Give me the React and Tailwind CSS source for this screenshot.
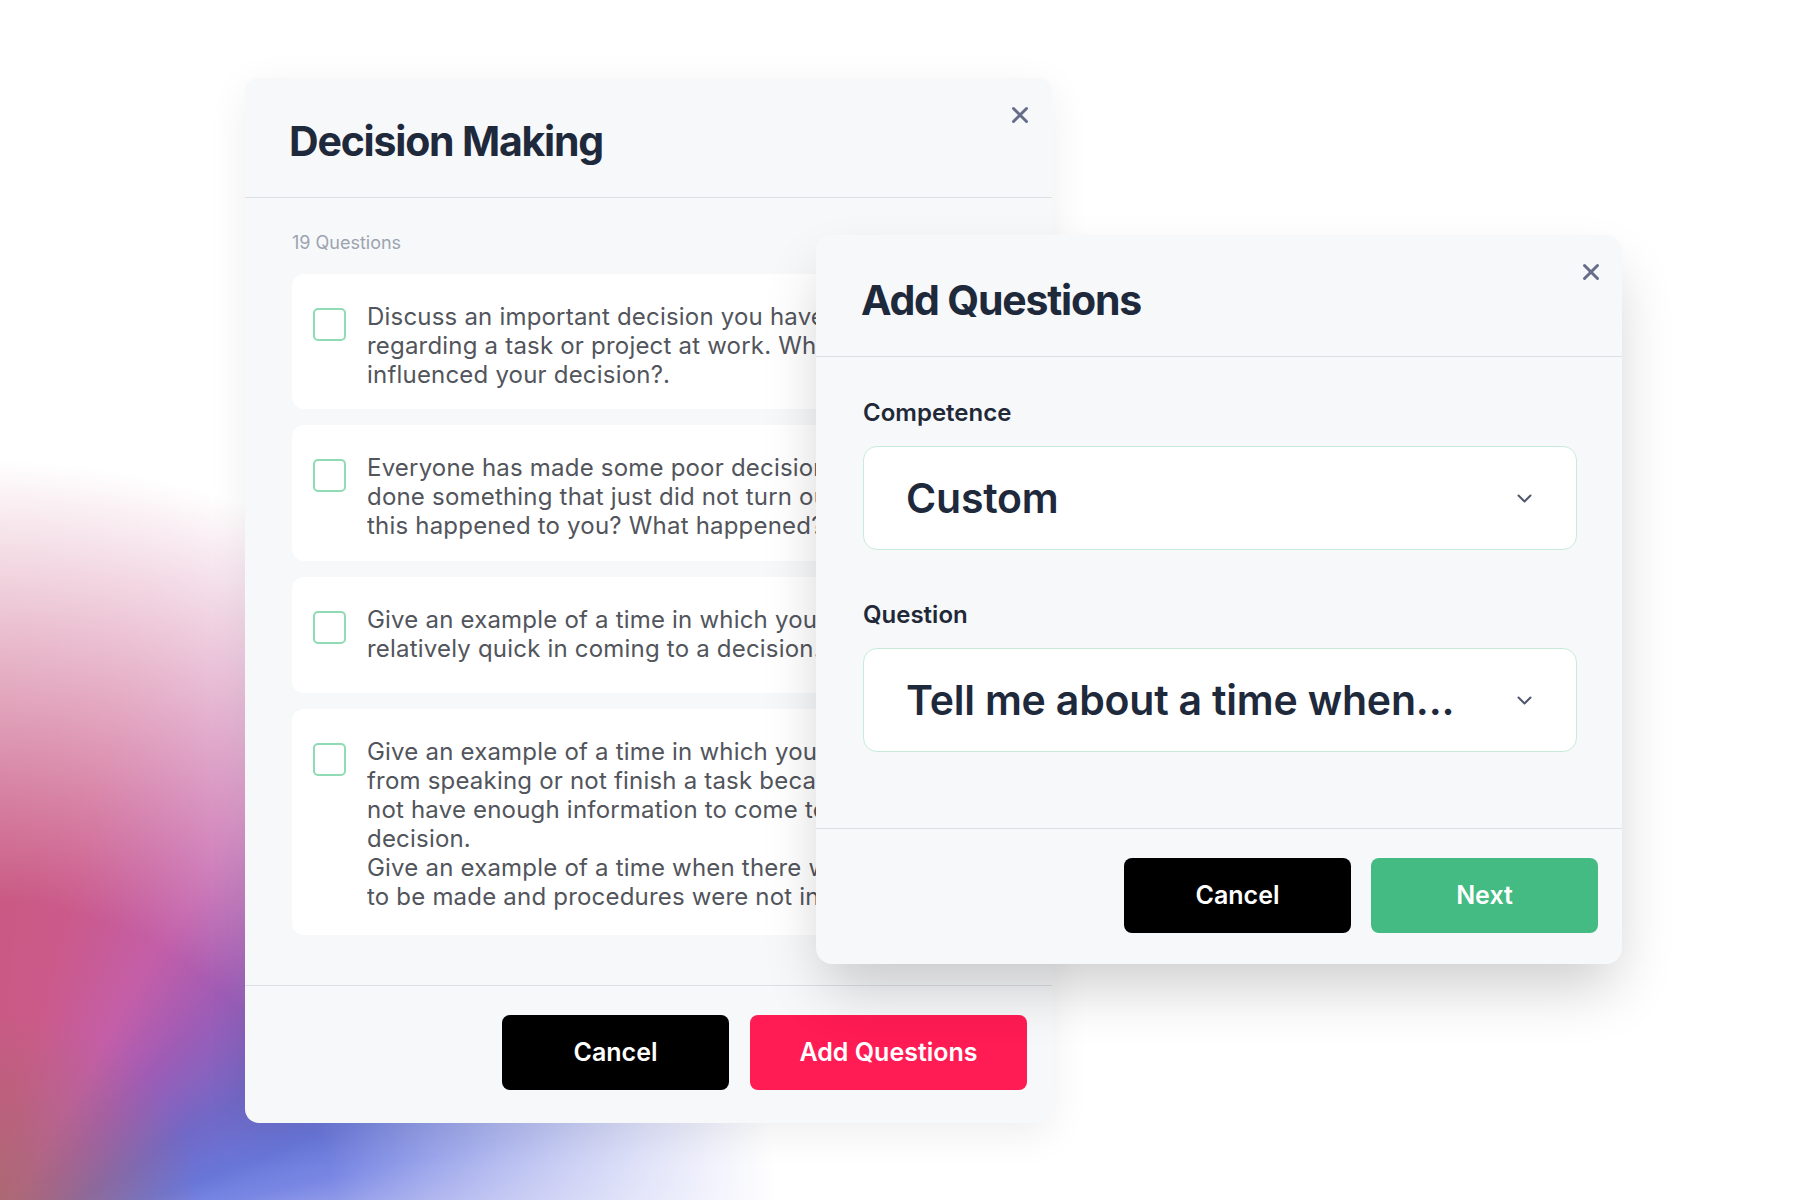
const QUESTIONS = [
  {
    h: 'h-[135px]',
    lines: [
      'Discuss an important decision you have made',
      'regarding a task or project at work. What factors',
      'influenced your decision?.',
    ],
  },
  {
    h: 'h-[136px]',
    lines: [
      'Everyone has made some poor decisions or has',
      'done something that just did not turn out right. Has',
      'this happened to you? What happened?',
    ],
  },
  {
    h: 'h-[116px]',
    lines: [
      'Give an example of a time in which you were',
      'relatively quick in coming to a decision.',
    ],
  },
  {
    h: 'h-[226px]',
    lines: [
      'Give an example of a time in which you had to refrain',
      'from speaking or not finish a task because you did',
      'not have enough information to come to a good',
      'decision.',
      'Give an example of a time when there was a decision',
      'to be made and procedures were not in place.',
    ],
  },
]

function CloseIcon() {
  return (
    <svg width="18" height="18" viewBox="0 0 18 18" fill="none" stroke="#666d8a" strokeWidth="3" strokeLinecap="round">
      <line x1="2.5" y1="2.5" x2="15.5" y2="15.5" />
      <line x1="15.5" y1="2.5" x2="2.5" y2="15.5" />
    </svg>
  )
}

function Chevron() {
  return (
    <svg width="15" height="9" viewBox="0 0 15 9" fill="none" stroke="#50566b" strokeWidth="2" strokeLinecap="round" strokeLinejoin="round">
      <polyline points="1.5,1.5 7.5,7.5 13.5,1.5" />
    </svg>
  )
}

function Select({ value }) {
  return (
    <div className="h-[104px] w-full rounded-[14px] border-[1.5px] border-[#c6ecd9] bg-white flex items-center justify-between pl-[42px] pr-[44px]">
      <span className="text-[41px] leading-[48px] font-semibold text-[#1e293b] tracking-[-0.2px]">{value}</span>
      <Chevron />
    </div>
  )
}

export default function App() {
  return (
    <div className="relative w-[1800px] h-[1200px] overflow-hidden font-['Inter',sans-serif] bg-white bg-[radial-gradient(circle_at_-20px_1260px,rgba(255,255,255,0)_360px,#ffffff_800px),radial-gradient(circle_at_0px_1210px,rgba(168,106,112,0.95)_0px,rgba(168,106,112,0)_200px),conic-gradient(from_0deg_at_-20px_1260px,#c95a82_0deg,#cb5a8a_14deg,#c35ea8_30deg,#a05cb5_42deg,#7268c6_58deg,#6876d8_70deg,#7a88e4_77deg,#b0b4f0_86deg,#e8e8fa_96deg,#ffffff_112deg)]">
      <div className="pt-[78px] pl-[245px]">
        {/* Decision Making */}
        <div className="w-[807px] h-[1045px] rounded-[14px] bg-[#f7f8fa] shadow-[0_10px_40px_rgba(0,0,0,0.07)] flex flex-col">
          <div className="relative h-[120px] border-b border-[#dcdfe4] pt-[39px] pl-[44px]">
            <h1 className="text-[41px] leading-[48px] font-bold text-[#1e293b] tracking-[-1.2px]">Decision Making</h1>
            <button className="absolute top-[28px] right-[23px]">
              <CloseIcon />
            </button>
          </div>

          <div className="flex-1 pt-[33px] px-[47px]">
            <div className="text-[18px] leading-[24px] text-[#9ca3af] mb-[19px]">19 Questions</div>
            <div className="flex flex-col gap-[16px]">
              {QUESTIONS.map((q, i) => (
                <div key={i} className={`${q.h} rounded-[12px] bg-white overflow-hidden flex items-start pt-[28px] pl-[21px] gap-[21px]`}>
                  <div className="mt-[6px] w-[33px] h-[33px] shrink-0 rounded-[5px] border-2 border-[#8fdcb4] bg-white" />
                  {/* text runs on under the Add Questions panel */}
                  <div className="w-[449px] overflow-hidden text-[24px] leading-[29px] tracking-[0.2px] text-[#52555c] whitespace-nowrap">
                    {q.lines.map((l, j) => (
                      <div key={j}>{l}</div>
                    ))}
                  </div>
                </div>
              ))}
            </div>
          </div>

          <div className="h-[138px] border-t border-[#dcdfe4] flex justify-end items-start pt-[29px] pr-[25px] gap-[21px]">
            <button className="w-[227px] h-[75px] rounded-[8px] bg-black text-white text-[25px] font-semibold">Cancel</button>
            <button className="w-[277px] h-[75px] rounded-[8px] bg-[#ff1b53] text-white text-[25px] font-semibold">Add Questions</button>
          </div>
        </div>
      </div>

      {/* Add Questions */}
      <div className="absolute left-[816px] top-[235px] w-[806px] h-[729px] rounded-[16px] bg-[#f7f8fa] shadow-[0_30px_60px_-8px_rgba(0,0,0,0.2)] flex flex-col">
        <div className="relative h-[122px] border-b border-[#dcdfe4] pt-[41px] pl-[45px]">
          <h2 className="text-[41px] leading-[48px] font-bold text-[#1e293b] tracking-[-1.2px]">Add Questions</h2>
          <button className="absolute top-[28px] right-[22px]">
            <CloseIcon />
          </button>
        </div>

        <div className="flex-1 pt-[42px] pl-[47px] pr-[45px]">
          <div className="text-[24px] leading-[28px] font-semibold text-[#1f2937] mb-[19px]">Competence</div>
          <Select value="Custom" />
          <div className="mt-[51px] text-[24px] leading-[28px] font-semibold text-[#1f2937] mb-[19px]">Question</div>
          <Select value="Tell me about a time when..." />
        </div>

        <div className="h-[136px] border-t border-[#dcdfe4] flex justify-end items-start pt-[29px] pr-[24px] gap-[20px]">
          <button className="w-[227px] h-[75px] rounded-[8px] bg-black text-white text-[25px] font-semibold">Cancel</button>
          <button className="w-[227px] h-[75px] rounded-[8px] bg-[#44bb82] text-white text-[25px] font-semibold">Next</button>
        </div>
      </div>
    </div>
  )
}
